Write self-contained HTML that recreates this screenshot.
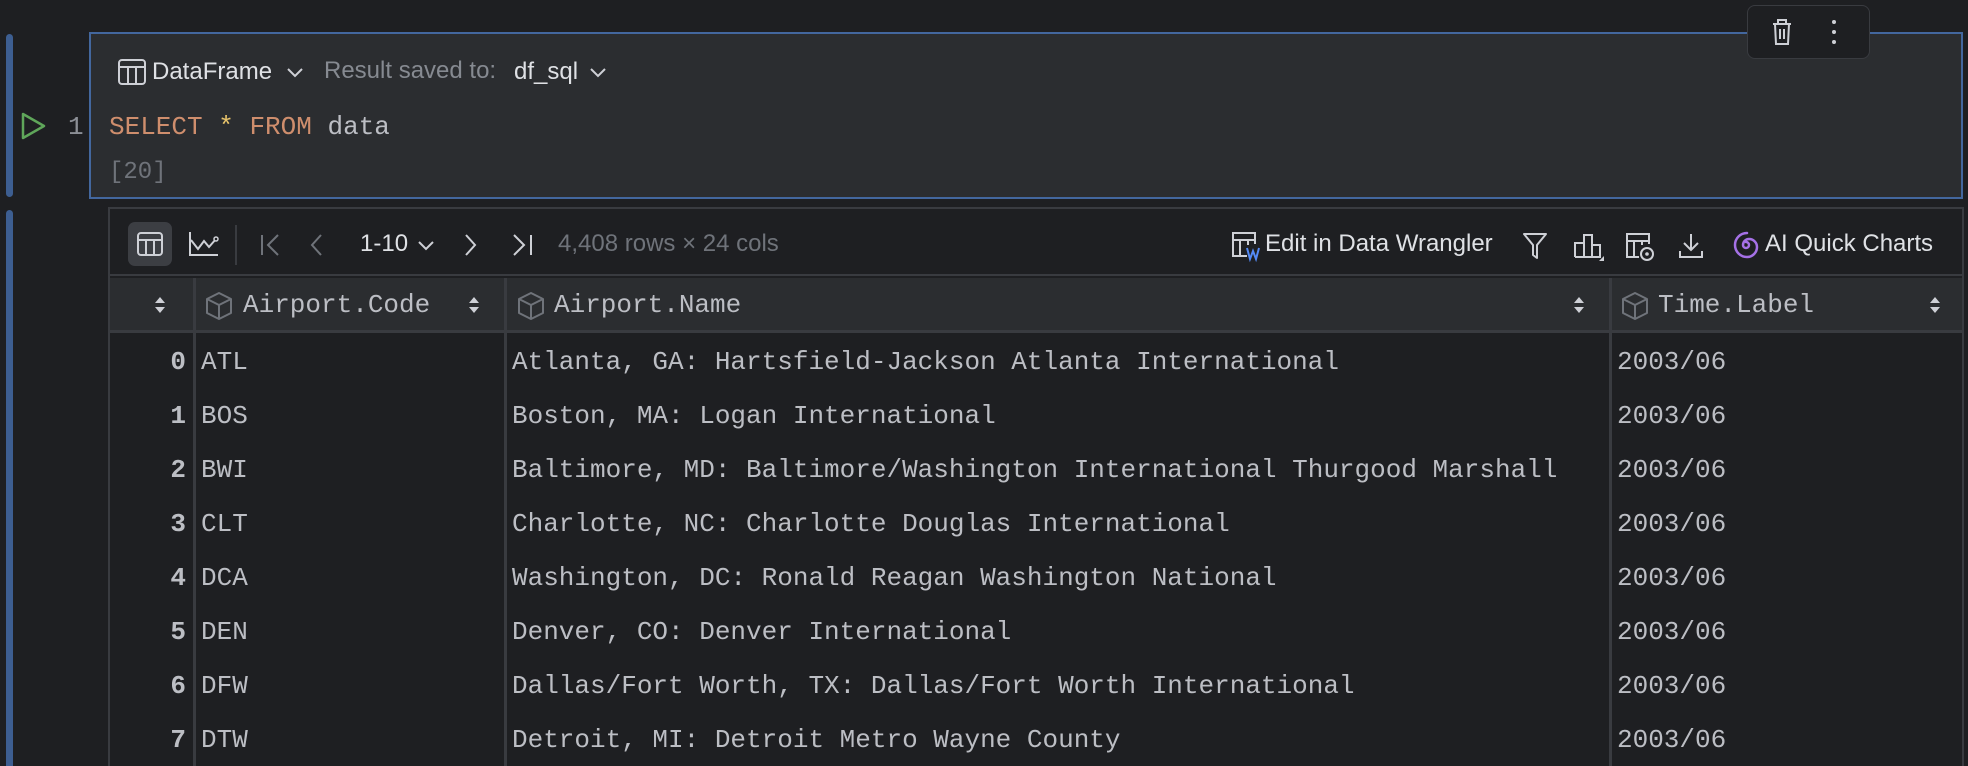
<!DOCTYPE html>
<html><head><meta charset="utf-8"><style>
*{box-sizing:border-box;margin:0;padding:0}
html,body{width:1968px;height:766px;overflow:hidden}
body{background:#1e1f22;position:relative;font-family:"Liberation Sans",sans-serif;color:#dfe1e5}
.a{position:absolute;white-space:pre}
.mono{font-family:"Liberation Mono",monospace}
svg{position:absolute;overflow:visible}
.row{position:absolute;left:0;width:1852px;height:54px;font-size:26px;line-height:54px;color:#bcbec4}
.row b{position:absolute;left:0;width:76px;text-align:right}
.ui{font-size:24px;line-height:32px}
</style></head><body>
<div class="a" style="left:6px;top:34px;width:7px;height:163px;background:#3d5e91;border-radius:4px"></div>
<div class="a" style="left:6px;top:210px;width:7px;height:556px;background:#3d5e91;border-radius:4px 4px 0 0"></div>

<div class="a" style="left:89px;top:32px;width:1874px;height:167px;background:#2b2d30;border:2px solid #43679e"></div>
<svg style="left:20px;top:112px" width="28" height="28"><path d="M3 2 L24 14 L3 26 Z" fill="none" stroke="#5fa65a" stroke-width="2.5" stroke-linejoin="round"/></svg>
<div class="a mono" style="left:68px;top:110px;font-size:26px;line-height:34px;color:#8c8f96">1</div>

<svg style="left:118px;top:59px" width="28" height="26"><rect x="1" y="1" width="26" height="24" rx="3" fill="none" stroke="#ced0d6" stroke-width="2"/><line x1="1" y1="8" x2="27" y2="8" stroke="#ced0d6" stroke-width="2"/><line x1="10" y1="8" x2="10" y2="25" stroke="#ced0d6" stroke-width="2"/><line x1="18" y1="8" x2="18" y2="25" stroke="#ced0d6" stroke-width="2"/></svg>
<div class="a ui" style="left:152px;top:56px;color:#dfe1e5">DataFrame</div>
<svg style="left:287px;top:68px" width="16" height="10"><path d="M1 1 L8 8 L15 1" fill="none" stroke="#ced0d6" stroke-width="2"/></svg>
<div class="a ui" style="left:324px;top:55px;color:#868a91">Result saved to:</div>
<div class="a ui" style="left:514px;top:56px;color:#dfe1e5">df_sql</div>
<svg style="left:590px;top:68px" width="16" height="10"><path d="M1 1 L8 8 L15 1" fill="none" stroke="#ced0d6" stroke-width="2"/></svg>

<div class="a mono" style="left:109px;top:110px;font-size:26px;line-height:34px"><span style="color:#cf8e6d">SELECT</span> <span style="color:#e8c46b">*</span> <span style="color:#cf8e6d">FROM</span> <span style="color:#bcbec4">data</span></div>
<div class="a mono" style="left:109px;top:156px;font-size:24px;line-height:34px;color:#6f737a">[20]</div>

<div class="a" style="left:1747px;top:5px;width:123px;height:54px;background:#1e1f22;border:1.5px solid #393b40;border-radius:8px"></div>
<svg style="left:1771px;top:18px" width="22" height="28"><path d="M2 6 H20 M7 6 V2 H15 V6 M4 6 L5 26 H17 L18 6 M9 11 V21 M13 11 V21" fill="none" stroke="#ced0d6" stroke-width="2"/></svg>
<div class="a" style="left:1832px;top:20px;width:4px;height:4px;background:#ced0d6;border-radius:2px"></div>
<div class="a" style="left:1832px;top:30px;width:4px;height:4px;background:#ced0d6;border-radius:2px"></div>
<div class="a" style="left:1832px;top:40px;width:4px;height:4px;background:#ced0d6;border-radius:2px"></div>

<div class="a" style="left:108px;top:207px;width:1856px;height:559px;border:2px solid #393b40;border-bottom:none;background:#1e1f22;overflow:hidden">
  <div class="a" style="left:0;top:0;width:1852px;height:67px;border-bottom:2px solid #393b40"></div>
  <div class="a" style="left:18px;top:13px;width:44px;height:44px;background:#3c3e43;border-radius:7px"></div>
  <svg style="left:27px;top:23px" width="26" height="24"><rect x="1" y="1" width="24" height="22" rx="3" fill="none" stroke="#ced0d6" stroke-width="2"/><line x1="1" y1="8" x2="25" y2="8" stroke="#ced0d6" stroke-width="2"/><line x1="9" y1="8" x2="9" y2="23" stroke="#ced0d6" stroke-width="2"/><line x1="17" y1="8" x2="17" y2="23" stroke="#ced0d6" stroke-width="2"/></svg>
  <svg style="left:79px;top:22px" width="30" height="26"><path d="M1 1 V24 H29 M2 9 L9 18 L15 10 L20 16 L27 8" fill="none" stroke="#ced0d6" stroke-width="2"/><circle cx="27" cy="8" r="2" fill="#1e1f22" stroke="#ced0d6" stroke-width="1.5"/></svg>
  <div class="a" style="left:125px;top:16px;width:2px;height:40px;background:#393b40"></div>
  <svg style="left:150px;top:25px" width="22" height="22"><path d="M2 1 V21 M18 1 L8 11 L18 21" fill="none" stroke="#6f737a" stroke-width="2"/></svg>
  <svg style="left:200px;top:25px" width="14" height="22"><path d="M11 1 L2 11 L11 21" fill="none" stroke="#6f737a" stroke-width="2"/></svg>
  <div class="a ui" style="left:250px;top:19px;color:#dfe1e5">1-10</div>
  <svg style="left:308px;top:32px" width="16" height="10"><path d="M1 1 L8 8 L15 1" fill="none" stroke="#ced0d6" stroke-width="2"/></svg>
  <svg style="left:354px;top:25px" width="14" height="22"><path d="M2 1 L11 11 L2 21" fill="none" stroke="#ced0d6" stroke-width="2"/></svg>
  <svg style="left:402px;top:25px" width="22" height="22"><path d="M2 1 L12 11 L2 21 M19 1 V21" fill="none" stroke="#ced0d6" stroke-width="2"/></svg>
  <div class="a ui" style="left:448px;top:19px;color:#6f737a">4,408 rows × 24 cols</div>

  <svg style="left:1121px;top:22px" width="30" height="30"><path d="M16 25 H2 V2 H24 V13 M2 9 H24 M9 9 V25 M17 9 V14" fill="none" stroke="#ced0d6" stroke-width="2"/><path d="M16 17 L19 28 L22 20 L25 28 L28 17" fill="none" stroke="#548af7" stroke-width="2"/></svg>
  <div class="a ui" style="left:1155px;top:19px;color:#dfe1e5">Edit in Data Wrangler</div>
  <svg style="left:1413px;top:24px" width="24" height="26"><path d="M1 1 H23 L14 12 V25 L10 22 V12 Z" fill="none" stroke="#ced0d6" stroke-width="2" stroke-linejoin="round"/></svg>
  <svg style="left:1464px;top:24px" width="32" height="28"><path d="M1 24 V10 H10 V24 M10 24 V2 H18 V24 M18 24 V12 H26 V24 H1" fill="none" stroke="#ced0d6" stroke-width="2"/><path d="M25 28 L30 23 V28 Z" fill="#ced0d6"/></svg>
  <svg style="left:1515px;top:23px" width="32" height="30"><path d="M14 25 H2 V2 H24 V12 M2 9 H24 M9 9 V25 M17 9 V13" fill="none" stroke="#ced0d6" stroke-width="2"/><circle cx="22" cy="22" r="6" fill="none" stroke="#ced0d6" stroke-width="2"/><circle cx="22" cy="22" r="1.8" fill="#ced0d6"/></svg>
  <svg style="left:1568px;top:24px" width="26" height="26"><path d="M13 1 V17 M6 10 L13 17 L20 10 M2 18 V24 H24 V18" fill="none" stroke="#ced0d6" stroke-width="2"/></svg>
  <svg style="left:1622px;top:22px" width="28" height="28"><path d="M14 14 m0 -3 a3 3 0 1 1 -3 3 a6 6 0 0 1 6 -6 a8 8 0 0 1 8 8 a10 10 0 0 1 -10 10 a12 12 0 0 1 -12 -12 a12 12 0 0 1 12 -12" fill="none" stroke="#a571e6" stroke-width="2.5" stroke-linecap="round"/></svg>
  <div class="a ui" style="left:1655px;top:19px;color:#dfe1e5">AI Quick Charts</div>

  <div class="a" style="left:0;top:69px;width:1852px;height:55px;background:#2b2d30;border-bottom:3px solid #393b40"></div>
  <div class="a" style="left:83px;top:69px;width:3px;height:490px;background:#393b40"></div>
  <div class="a" style="left:394px;top:69px;width:3px;height:490px;background:#393b40"></div>
  <div class="a" style="left:1499px;top:69px;width:3px;height:490px;background:#393b40"></div>
  <svg style="left:44px;top:87px" width="12" height="18"><path d="M1 7 L6 1 L11 7 Z M1 11 L6 17 L11 11 Z" fill="#ced0d6"/></svg>
  <svg style="left:358px;top:87px" width="12" height="18"><path d="M1 7 L6 1 L11 7 Z M1 11 L6 17 L11 11 Z" fill="#ced0d6"/></svg>
  <svg style="left:1463px;top:87px" width="12" height="18"><path d="M1 7 L6 1 L11 7 Z M1 11 L6 17 L11 11 Z" fill="#ced0d6"/></svg>
  <svg style="left:1819px;top:87px" width="12" height="18"><path d="M1 7 L6 1 L11 7 Z M1 11 L6 17 L11 11 Z" fill="#ced0d6"/></svg>
  <svg style="left:96px;top:83px" width="26" height="28"><path d="M13 1 L25 7 V21 L13 27 L1 21 V7 Z M1 7 L13 13 L25 7 M13 13 V27" fill="none" stroke="#6f737a" stroke-width="2" stroke-linejoin="round"/></svg>
  <svg style="left:408px;top:83px" width="26" height="28"><path d="M13 1 L25 7 V21 L13 27 L1 21 V7 Z M1 7 L13 13 L25 7 M13 13 V27" fill="none" stroke="#6f737a" stroke-width="2" stroke-linejoin="round"/></svg>
  <svg style="left:1512px;top:83px" width="26" height="28"><path d="M13 1 L25 7 V21 L13 27 L1 21 V7 Z M1 7 L13 13 L25 7 M13 13 V27" fill="none" stroke="#6f737a" stroke-width="2" stroke-linejoin="round"/></svg>
  <div class="a mono" style="left:133px;top:69px;font-size:26px;line-height:55px;color:#bcbec4">Airport.Code</div>
  <div class="a mono" style="left:444px;top:69px;font-size:26px;line-height:55px;color:#bcbec4">Airport.Name</div>
  <div class="a mono" style="left:1548px;top:69px;font-size:26px;line-height:55px;color:#bcbec4">Time.Label</div>

  <div class="a mono" style="left:0;top:126px;width:1852px;height:433px;overflow:hidden">
    <div class="row" style="top:0"><b>0</b><span class="a" style="left:91px">ATL</span><span class="a" style="left:402px">Atlanta, GA: Hartsfield-Jackson Atlanta International</span><span class="a" style="left:1507px">2003/06</span></div>
    <div class="row" style="top:54px"><b>1</b><span class="a" style="left:91px">BOS</span><span class="a" style="left:402px">Boston, MA: Logan International</span><span class="a" style="left:1507px">2003/06</span></div>
    <div class="row" style="top:108px"><b>2</b><span class="a" style="left:91px">BWI</span><span class="a" style="left:402px">Baltimore, MD: Baltimore/Washington International Thurgood Marshall</span><span class="a" style="left:1507px">2003/06</span></div>
    <div class="row" style="top:162px"><b>3</b><span class="a" style="left:91px">CLT</span><span class="a" style="left:402px">Charlotte, NC: Charlotte Douglas International</span><span class="a" style="left:1507px">2003/06</span></div>
    <div class="row" style="top:216px"><b>4</b><span class="a" style="left:91px">DCA</span><span class="a" style="left:402px">Washington, DC: Ronald Reagan Washington National</span><span class="a" style="left:1507px">2003/06</span></div>
    <div class="row" style="top:270px"><b>5</b><span class="a" style="left:91px">DEN</span><span class="a" style="left:402px">Denver, CO: Denver International</span><span class="a" style="left:1507px">2003/06</span></div>
    <div class="row" style="top:324px"><b>6</b><span class="a" style="left:91px">DFW</span><span class="a" style="left:402px">Dallas/Fort Worth, TX: Dallas/Fort Worth International</span><span class="a" style="left:1507px">2003/06</span></div>
    <div class="row" style="top:378px"><b>7</b><span class="a" style="left:91px">DTW</span><span class="a" style="left:402px">Detroit, MI: Detroit Metro Wayne County</span><span class="a" style="left:1507px">2003/06</span></div>
  </div>
</div>
</body></html>
